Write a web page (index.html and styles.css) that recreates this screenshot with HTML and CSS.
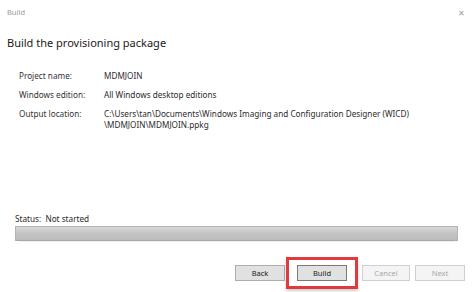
FILE: index.html
```html
<!DOCTYPE html>
<html lang="en">
<head>
  <meta charset="UTF-8">
  <title>Build</title>
  <link rel="stylesheet" href="styles.css">
</head>
<body>
<div class="window">
  <div class="title-bar">
    <span class="title">Build</span>
    <span class="close">&#x2715;</span>
  </div>

  <h1>Build the provisioning package</h1>

  <div class="info">
    <span class="label">Project name:</span>
    <span class="value">MDMJOIN</span>
    <span class="label">Windows edition:</span>
    <span class="value">All Windows desktop editions</span>
    <span class="label">Output location:</span>
    <span class="value">C:\Users\tan\Documents\Windows Imaging and Configuration Designer (WICD)<br>\MDMJOIN\MDMJOIN.ppkg</span>
  </div>

  <div class="status-area">
    <div class="status">Status:&nbsp; Not started</div>
    <div class="progress"></div>
  </div>

  <div class="footer">
    <button class="btn">Back</button>
    <span class="highlight"><button class="btn">Build</button></span>
    <button class="btn disabled cancel">Cancel</button>
    <button class="btn disabled">Next</button>
  </div>
</div>
</body>
</html>
```

FILE: styles.css
```css
body {
  margin: 0;
  padding: 0;
  background-color: #ffffff;
  font-family: 'Noto Sans', 'Open Sans', sans-serif;
  color: #2b2b2b;
}

.window {
  width: 474px;
  height: 292px;
  display: flex;
  flex-direction: column;
  box-sizing: border-box;
}

.title-bar {
  height: 24px;
  display: flex;
  align-items: center;
  justify-content: space-between;
  padding: 0 9px 0 7px;
}

.title {
  font-size: 7.5px;
  color: #9a9a9a;
}

.close {
  font-size: 8px;
  color: #9a9a9a;
}

h1 {
  margin: 11px 0 0 7px;
  font-size: 11px;
  font-weight: 400;
  color: #1a1a1a;
}

.info {
  display: grid;
  grid-template-columns: 85px 1fr;
  row-gap: 8px;
  margin: 20px 0 0 19px;
  font-size: 8.2px;
  line-height: 11px;
}

.label {
  color: #333333;
}

.value {
  color: #2b2b2b;
}

.status-area {
  margin-top: auto;
  padding: 0 16px 0 15px;
}

.status {
  font-size: 8.2px;
  color: #2b2b2b;
  margin-bottom: 2px;
}

.progress {
  height: 13px;
  border: 1px solid #b4b4b4;
  background: linear-gradient(#d8d8d8, #c4c4c4 50%, #bcbcbc);
  border-bottom-color: #a8a8a8;
  box-shadow: 0 5px 0 -4px #f0f0f0;
}

.footer {
  display: flex;
  align-items: center;
  justify-content: flex-end;
  padding: 16px 9px 3px 0;
}

.btn {
  width: 50px;
  height: 16px;
  padding: 0;
  font-family: 'Noto Sans', 'Open Sans', sans-serif;
  font-size: 7.5px;
  color: #1a1a1a;
  background-color: #e1e1e1;
  border: 1px solid #adadad;
  margin-left: 5px;
}

.highlight {
  display: flex;
  border: 3px solid #e0393e;
  padding: 5px 8px;
  margin-left: 1px;
  box-shadow: 0 2px 3px rgba(0, 0, 0, 0.2);
}

.highlight .btn {
  margin-left: 0;
  border-color: #7a7a7a;
}

.btn.cancel {
  width: 48px;
  margin-left: 4px;
}

.btn.disabled {
  color: #a8a8a8;
  background-color: #f4f4f4;
  border-color: #cfcfcf;
}
```
